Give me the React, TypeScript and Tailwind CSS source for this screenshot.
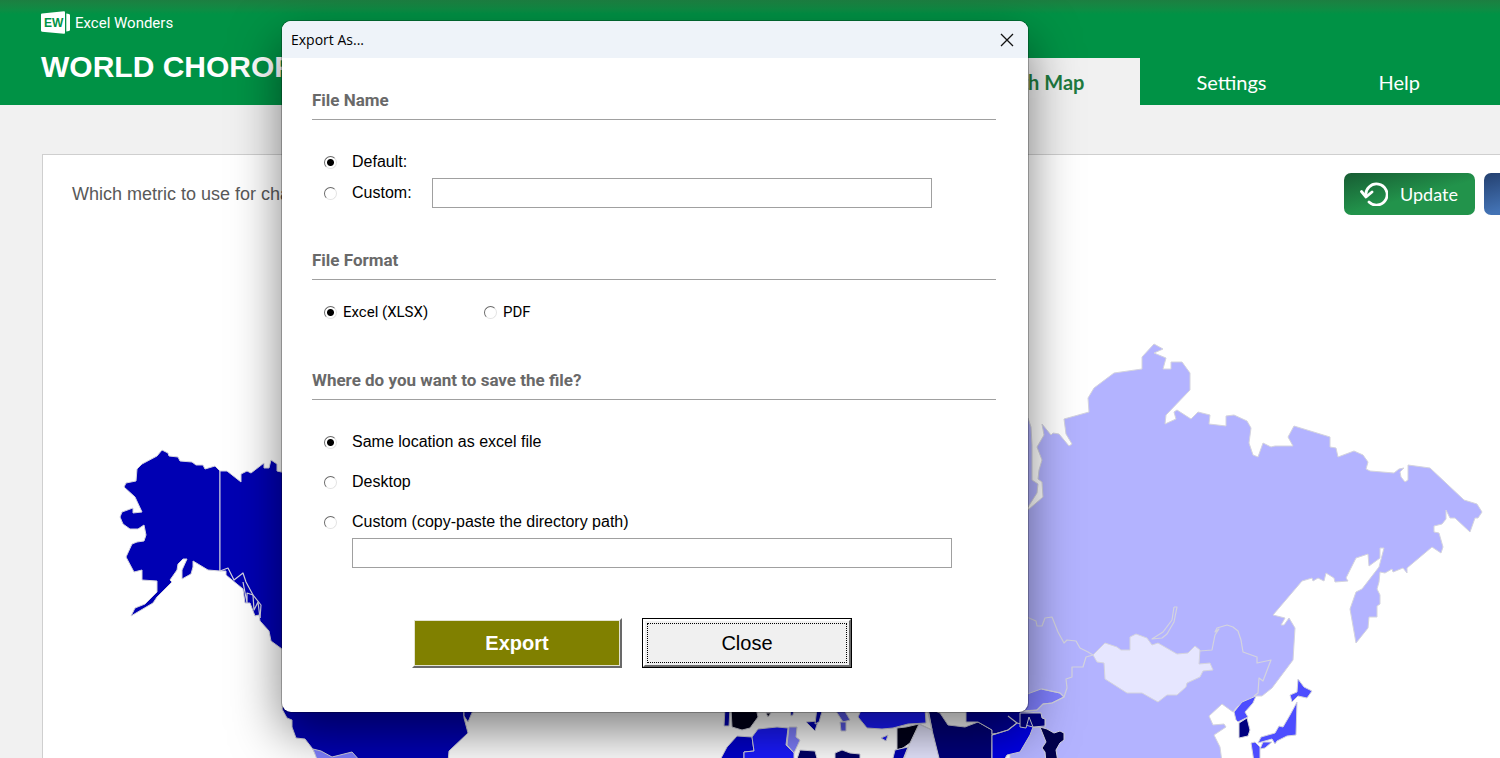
import { useState } from 'react';
import type { ReactNode } from 'react';

// --- Map data ---

type Region = { name: string; fill: string; points: string };

const REGIONS: Region[] = [
  {
    name: 'Alaska',
    fill: '#0000b3',
    points:
      '162,450 168,453 169,456 178,457 180,461 192,462 196,465 203,465 205,469 215,466 220,471 220,571 208,570 193,561 193,567 191,574 182,579 182,570 187,559 183,559 178,564 177,570 170,580 172,582 157,597 153,603 131,616 135,608 145,604 157,592 157,581 142,580 142,570 134,572 126,557 132,544 137,542 144,541 146,535 144,525 138,529 130,529 123,524 120,517 122,512 133,508 133,513 142,512 135,497 124,487 126,483 136,481 137,469 142,464 157,456',
  },
  {
    name: 'North America',
    fill: '#0000b3',
    points:
      '220,471 227,471 241,482 241,474 247,471 251,473 264,463 264,468 269,468 271,460 277,464 277,471 290,474 460,560 464,718 468,733 449,751 448,762 320,762 312,748 305,739 296,738 292,727 292,720 287,718 282,709 300,660 282,649 271,641 269,631 260,621 259,615 255,616 250,603 245,603 243,589 226,575 226,571 220,571',
  },
  { name: 'Great Lakes', fill: '#0000b3', points: '464,708 474,708 468,722 464,716' },
  { name: 'Mexico', fill: '#8080ff', points: '313,749 321,751 332,757 352,752 361,762 318,762' },
  { name: 'Portugal', fill: '#0000b3', points: '725,708 730,708 729,726 724,726' },
  { name: 'Spain', fill: '#00001a', points: '731,708 756,708 758,717 750,728 742,730 732,727' },
  { name: 'Mallorca', fill: '#00001a', points: '766,713 771,713 768,717' },
  { name: 'Sardinia', fill: '#0000b3', points: '790,708 794,708 793,715 791,716' },
  { name: 'Morocco', fill: '#0000cc', points: '737,736 752,737 754,751 744,752 744,762 719,762 727,747' },
  { name: 'Algeria', fill: '#1a1aff', points: '752,737 758,729 777,727 788,728 786,745 794,753 794,762 744,762 744,752 754,751' },
  { name: 'Tunisia', fill: '#8080ff', points: '789,727 797,727 796,737 800,740 794,753 787,745' },
  { name: 'Libya', fill: '#000066', points: '800,750 815,751 818,762 796,762' },
  { name: 'Egypt', fill: '#000066', points: '835,753 842,750 850,753 860,754 860,762 835,762' },
  { name: 'Sicily', fill: '#0000b3', points: '806,722 818,721 815,731' },
  { name: 'Italy', fill: '#0000b3', points: '817,708 823,708 819,722 815,724' },
  { name: 'Albania', fill: '#5959e6', points: '834,708 843,708 850,720 843,722' },
  { name: 'Peloponnese', fill: '#5959e6', points: '840,722 846,722 846,731 841,731' },
  { name: 'Turkey', fill: '#1a1aff', points: '858,717 862,708 925,708 926,723 908,724 893,728 882,729 867,728' },
  { name: 'Cyprus', fill: '#1a1aff', points: '881,738 888,735 886,741' },
  { name: 'Iraq', fill: '#e6e6ff', points: '919,724 932,730 940,762 903,762 910,743' },
  { name: 'Syria', fill: '#00001a', points: '897,728 906,727 919,724 910,743 903,748 897,750' },
  { name: 'Israel', fill: '#0000b3', points: '895,750 908,747 902,762 892,762' },
  { name: 'Iran', fill: '#00007a', points: '928,708 940,713 948,725 965,727 978,722 992,730 992,762 940,762 932,730' },
  {
    name: 'Russia and China',
    fill: '#b3b3ff',
    points:
      '1010,510 1028,510 1043,497 1042,482 1038,479 1039,470 1042,460 1037,447 1044,435 1042,424 1051,435 1053,433 1059,434 1069,446 1072,444 1066,434 1064,419 1089,412 1088,398 1094,388 1114,373 1142,369 1142,357 1154,344 1163,349 1154,353 1166,358 1163,369 1171,369 1171,362 1182,362 1190,373 1190,390 1166,415 1165,424 1176,419 1174,412 1177,410 1191,419 1198,412 1210,415 1209,424 1226,426 1226,416 1234,415 1247,421 1251,428 1249,443 1253,455 1258,457 1263,443 1271,447 1275,446 1293,446 1288,437 1294,426 1330,437 1330,447 1336,448 1338,457 1354,451 1363,455 1368,462 1366,469 1370,471 1394,473 1399,469 1404,468 1400,472 1401,477 1405,482 1408,480 1408,465 1430,468 1464,500 1477,504 1482,512 1478,518 1475,518 1470,532 1455,518 1450,518 1446,510 1446,519 1442,524 1434,526 1434,532 1439,533 1443,547 1441,553 1432,547 1407,568 1407,573 1403,568 1393,572 1392,569 1385,573 1380,572 1379,582 1377,589 1380,595 1380,604 1377,606 1377,617 1369,617 1368,628 1356,643 1350,609 1356,592 1362,589 1379,567 1384,548 1380,548 1380,558 1369,566 1368,554 1356,558 1346,578 1348,581 1335,582 1334,578 1326,573 1324,581 1318,578 1313,581 1312,578 1302,581 1273,615 1285,618 1281,625 1284,625 1289,618 1295,628 1293,660 1272,688 1262,696 1256,696 1237,707 1233,712 1222,704 1209,716 1213,725 1224,724 1226,727 1214,735 1220,747 1222,762 1010,762',
  },
  { name: 'Ural coast', fill: '#b3b3ff', points: '1010,418 1028,418 1031,427 1032,445 1032,480 1038,484 1037,493 1028,507 1010,510' },
  {
    name: 'Mongolia',
    fill: '#e6e6ff',
    points:
      '1093,655 1105,643 1117,647 1121,650 1130,650 1130,637 1136,634 1147,638 1152,645 1158,643 1177,654 1188,653 1195,646 1200,650 1199,664 1210,663 1213,670 1203,671 1200,677 1187,683 1186,687 1177,695 1167,695 1158,702 1142,693 1127,693 1105,679 1104,663 1097,662',
  },
  { name: 'Kyrgyzstan', fill: '#8080ff', points: '1020,697 1030,693 1041,689 1060,693 1064,697 1052,703 1043,704 1037,710 1020,712' },
  { name: 'Uzbekistan', fill: '#000099', points: '966,708 1041,713 1042,718 1045,719 1045,727 1020,728 1000,733 992,734 992,730 978,722 966,722' },
  { name: 'Afghanistan', fill: '#0000e6', points: '992,735 1008,730 1017,723 1033,727 1030,735 1020,752 1007,755 1003,762 992,762' },
  { name: 'Tajikistan', fill: '#000080', points: '1020,713 1041,713 1042,718 1045,719 1045,726 1033,727 1029,717 1026,728 1020,727' },
  { name: 'Kashmir', fill: '#00004d', points: '1040,727 1047,729 1054,733 1060,731 1064,733 1064,740 1060,743 1056,750 1058,762 1046,762 1045,752 1042,748 1046,742' },
  { name: 'North Korea', fill: '#4d4dff', points: '1234,712 1242,702 1256,696 1253,703 1245,712 1248,717 1238,722 1236,720' },
  { name: 'South Korea', fill: '#000080', points: '1239,723 1247,718 1250,730 1248,736 1239,738' },
  { name: 'Hokkaido', fill: '#4d4dff', points: '1298,679 1304,687 1312,691 1307,698 1298,696 1292,702 1290,695 1297,692' },
  { name: 'Honshu', fill: '#4d4dff', points: '1297,702 1296,735 1287,736 1277,741 1275,744 1272,739 1258,743 1261,737 1275,733 1279,726 1283,727 1290,715' },
  { name: 'Shikoku', fill: '#4d4dff', points: '1260,749 1263,742 1272,742 1265,748' },
  { name: 'Kyushu', fill: '#4d4dff', points: '1251,743 1255,742 1260,747 1260,762 1254,762' },
];

const BORDERS: string[] = [
  '1020,614 1029,618 1036,621 1037,626 1042,626 1045,618 1052,617 1058,632 1064,643 1067,640 1076,641 1080,648 1088,652 1093,655 1086,657 1083,667 1072,667 1072,677 1066,679 1067,688 1064,697',
  '1200,651 1212,650 1215,635 1219,629 1215,632 1217,628 1227,625 1233,627 1238,631 1241,640 1243,652 1257,657 1257,663 1271,660 1263,681 1259,678 1258,693 1254,696',
  '1174,607 1177,607 1174,622 1167,634 1162,638 1152,639 1163,632 1172,620 1174,607',
  '220,571 228,568 234,580 243,573 246,582 253,595 261,605 260,618',
  '243,582 247,603 247,593 253,595 254,610 258,602 260,618',
  '1020,711 1037,710 1043,704 1052,703 1064,697 1060,693 1042,689',
  '992,735 1008,730 1017,723 1008,716',
  '919,724 932,730 928,712',
];

function WorldMap() {
  return (
    <svg viewBox="43 215 1457 543" className="block w-full" role="img" aria-label="World map">
      <g stroke="#d4d4de" strokeWidth="1" strokeLinejoin="round">
        {REGIONS.map((r) => (
          <polygon key={r.name} points={r.points} fill={r.fill} />
        ))}
      </g>
      <g fill="none" stroke="#d4d4de" strokeWidth="1.2" strokeLinejoin="round">
        {BORDERS.map((points) => (
          <polyline key={points} points={points} />
        ))}
      </g>
    </svg>
  );
}

// --- Header ---

function Logo() {
  return (
    <svg width="30" height="24" viewBox="0 0 30 24" aria-hidden="true">
      <path d="M1 2.5 23 .3Q24 .2 24 1.5V21.5Q24 23 23 22.8L1 20.7Q0 20.6 0 19.5V3.5Q0 2.6 1 2.5Z" fill="#fff" />
      <path d="M25.3 2.5 28 3Q29 3.2 29 4.2V18.8Q29 19.8 28 20L25.3 20.5Z" fill="#fff" />
      <text x="3" y="16" fontSize="12" fontWeight="700" fontFamily="Liberation Sans, sans-serif" fill="#009245">
        EW
      </text>
    </svg>
  );
}

const Tab = ({ label, active = false }: { label: string; active?: boolean }) => (
  <a
    href="#"
    className={`flex h-[47px] items-center px-14 text-[20px] whitespace-nowrap ${active ? 'bg-[#f1f1f1] font-bold text-[#1e7b40]' : 'text-white'}`}
  >
    {label}
  </a>
);

function Header() {
  return (
    <header className="flex h-[105px] shrink-0 items-end justify-between bg-[#009245] bg-linear-to-b from-[#1c7f41] from-0% to-[#009245] to-[14px]">
      <div className="self-start pt-[11px] pl-[41px]">
        <div className="flex items-center gap-1 font-[Roboto,sans-serif] text-[15px] leading-6 text-white">
          <Logo />
          <span>Excel Wonders</span>
        </div>
        <h1 className="mt-3 text-[30px] leading-10 font-bold whitespace-nowrap text-white">WORLD CHOROPLETH MAP</h1>
      </div>
      <nav className="flex pr-6 font-[Lato,sans-serif]">
        <Tab label="Choropleth Map" active />
        <Tab label="Settings" />
        <Tab label="Help" />
      </nav>
    </header>
  );
}

// --- Dialog ---

const Radio = ({ id, name, checked, onChange }: { id: string; name: string; checked: boolean; onChange: () => void }) => (
  <input
    id={id}
    type="radio"
    name={name}
    checked={checked}
    onChange={onChange}
    className="size-[13px] shrink-0 appearance-none rounded-full border border-t-[#696969] border-r-[#e3e3e3] border-b-[#e3e3e3] border-l-[#696969] bg-white checked:bg-[radial-gradient(circle,#000_3px,transparent_4px)]"
  />
);

const Section = ({ title, className = '', children }: { title: string; className?: string; children: ReactNode }) => (
  <section className={className}>
    <h3 className="border-b border-[#a0a0a0] pb-[7px] font-[Roboto,sans-serif] text-[17px] leading-6 font-bold text-[#696969]">
      {title}
    </h3>
    {children}
  </section>
);

function ExportDialog() {
  const [fileName, setFileName] = useState('default');
  const [format, setFormat] = useState('xlsx');
  const [location, setLocation] = useState('same');

  return (
    <div
      role="dialog"
      aria-labelledby="dialog-title"
      className="absolute top-[21px] left-[282px] w-[746px] overflow-hidden rounded-[9px] bg-white text-[16px] leading-6 text-black shadow-[0_0_0_1px_rgba(0,0,0,0.25),0_20px_50px_rgba(0,0,0,0.5)]"
    >
      <div className="flex h-[37px] items-center justify-between bg-[#eef3f9] pr-3 pl-[9px]">
        <h2 id="dialog-title" className="font-['Open_Sans',sans-serif] text-[14px]">Export As...</h2>
        <button type="button" aria-label="Close window" className="p-0.5">
          <svg width="14" height="14" viewBox="0 0 14 14" fill="none" stroke="#111" strokeWidth="1.3">
            <path d="M1 1 13 13M13 1 1 13" />
          </svg>
        </button>
      </div>

      <div className="pt-[30px] pr-8 pb-11 pl-[30px]">
        <Section title="File Name">
          <div className="mt-[30px] flex items-center gap-[15px] pl-3">
            <Radio id="name-default" name="file-name" checked={fileName === 'default'} onChange={() => setFileName('default')} />
            <label htmlFor="name-default">Default:</label>
          </div>
          <div className="mt-1 flex items-center gap-[15px] pl-3">
            <Radio id="name-custom" name="file-name" checked={fileName === 'custom'} onChange={() => setFileName('custom')} />
            <div className="flex items-center">
              <label htmlFor="name-custom" className="w-20">Custom:</label>
              <input type="text" aria-label="Custom file name" className="h-[30px] w-[500px] border border-[#a0a0a0] px-2" />
            </div>
          </div>
        </Section>

        <Section title="File Format" className="mt-10">
          <div className="mt-5 flex pl-3 font-[Roboto,sans-serif] text-[15px]">
            <div className="flex w-40 items-center gap-1.5">
              <Radio id="format-xlsx" name="format" checked={format === 'xlsx'} onChange={() => setFormat('xlsx')} />
              <label htmlFor="format-xlsx">Excel (XLSX)</label>
            </div>
            <div className="flex items-center gap-1.5">
              <Radio id="format-pdf" name="format" checked={format === 'pdf'} onChange={() => setFormat('pdf')} />
              <label htmlFor="format-pdf">PDF</label>
            </div>
          </div>
        </Section>

        <Section title="Where do you want to save the file?" className="mt-11">
          <div className="mt-[30px] flex flex-col gap-4 pl-3">
            <div className="flex items-center gap-[15px]">
              <Radio id="loc-same" name="location" checked={location === 'same'} onChange={() => setLocation('same')} />
              <label htmlFor="loc-same">Same location as excel file</label>
            </div>
            <div className="flex items-center gap-[15px]">
              <Radio id="loc-desktop" name="location" checked={location === 'desktop'} onChange={() => setLocation('desktop')} />
              <label htmlFor="loc-desktop">Desktop</label>
            </div>
            <div className="flex items-center gap-[15px]">
              <Radio id="loc-custom" name="location" checked={location === 'custom'} onChange={() => setLocation('custom')} />
              <label htmlFor="loc-custom">Custom (copy-paste the directory path)</label>
            </div>
          </div>
          <input type="text" aria-label="Directory path" className="mt-1 ml-10 block h-[30px] w-[600px] border border-[#a0a0a0] px-2" />
        </Section>

        <div className="mt-[50px] flex gap-5 pl-[100px] text-[20px]">
          <button
            type="button"
            className="h-[50px] w-[210px] border-2 border-t-white border-r-[#696969] border-b-[#696969] border-l-white bg-[#808000] font-bold text-white shadow-[inset_0_0_0_1px_#e3e3d0]"
          >
            Export
          </button>
          <button type="button" className="flex h-[50px] w-[210px] border border-black">
            <span className="flex flex-1 self-stretch border-2 border-t-white border-r-[#696969] border-b-[#696969] border-l-white bg-[#f0f0f0] p-0.5">
              <span className="flex flex-1 items-center justify-center border border-dotted border-black">Close</span>
            </span>
          </button>
        </div>
      </div>
    </div>
  );
}

export default function App() {
  return (
    <div className="relative flex h-screen flex-col overflow-hidden bg-[#f1f1f1] font-['Liberation_Sans',Arial,sans-serif]">
      <Header />

      <main className="mt-[49px] ml-[42px] flex-1 overflow-hidden border-t border-l border-[#cfcfcf] bg-white">
        <div className="flex items-center justify-between overflow-hidden pt-[18px] pl-[29px]">
          <p className="text-[18px] text-[#595959]">Which metric to use for chart?</p>
          <div className="-mr-[115px] flex gap-[9px] font-[Lato,sans-serif] text-[18px] text-white">
            <button
              type="button"
              className="flex h-[42px] w-[131px] items-center gap-3 rounded-[7px] bg-[linear-gradient(165deg,#175c33,#22934b_55%)] pl-4"
            >
              <svg width="28" height="24" viewBox="0 0 28 24" fill="none" stroke="#fff" strokeWidth="2.8" strokeLinecap="round" strokeLinejoin="round">
                <path d="M6 14A10.6 10.6 0 1 1 9 20" />
                <path d="M1.5 9.5 6 15 12 10" />
              </svg>
              Update
            </button>
            <button
              type="button"
              aria-label="Export"
              className="h-[42px] w-[131px] rounded-[7px] bg-[linear-gradient(165deg,#24406f,#4373b5_55%)]"
            />
          </div>
        </div>
        <WorldMap />
      </main>

      <ExportDialog />
    </div>
  );
}
